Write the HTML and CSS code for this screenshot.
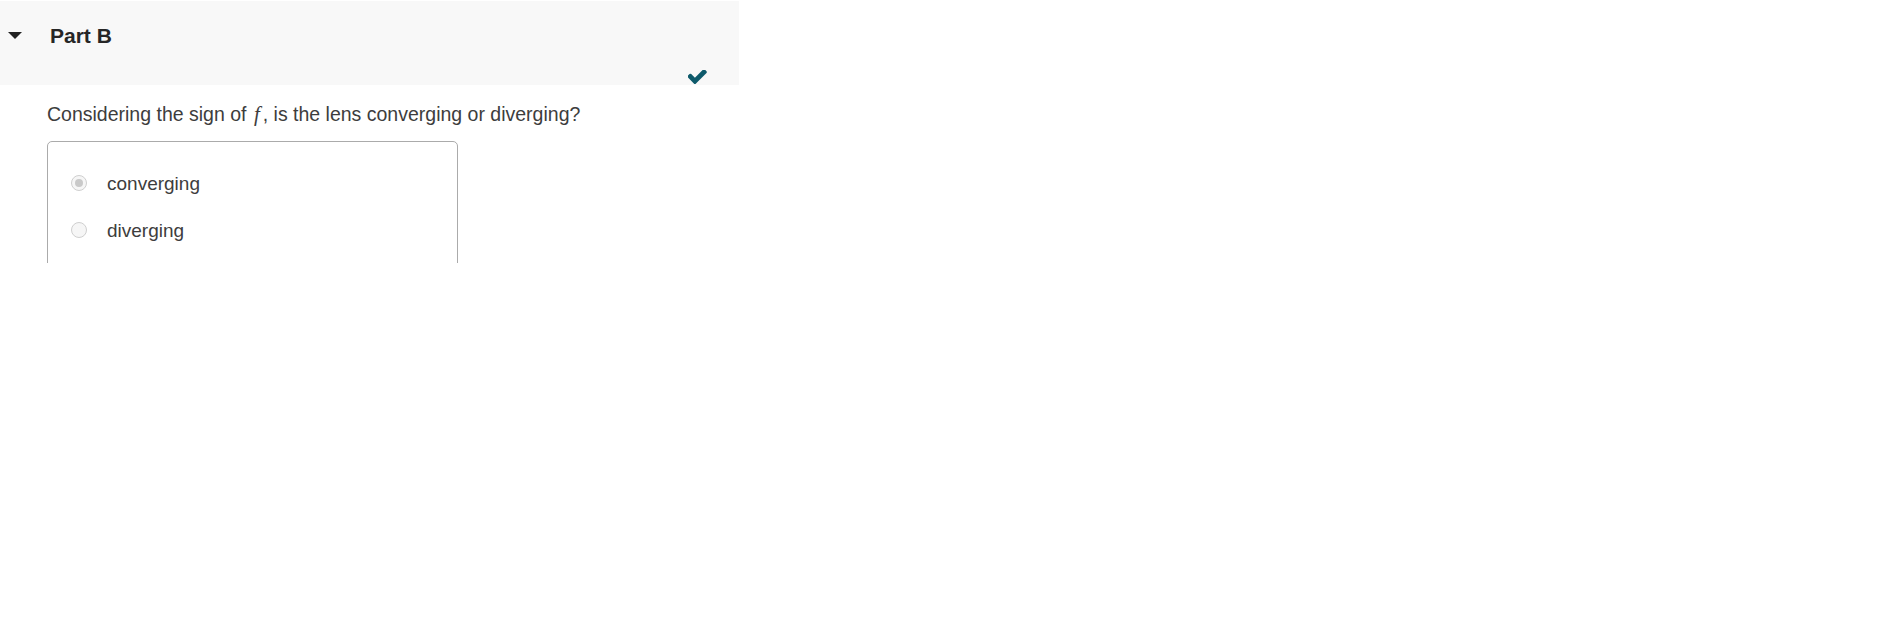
FILE: index.html
```html
<!DOCTYPE html>
<html lang="en">
<head>
<meta charset="utf-8">
<title>Part B</title>
<link rel="stylesheet" href="styles.css">
</head>
<body>
<div class="page">
  <div class="part-header">
    <div class="part-toggle">
      <span class="caret"></span>
      <span class="part-title">Part B</span>
    </div>
    <svg class="status-check" viewBox="173 402 1498 1120" width="19" height="14" aria-hidden="true">
      <path d="M1671 566q0 40-28 68l-724 724-136 136q-28 28-68 28t-68-28l-136-136-362-362q-28-28-28-68t28-68l136-136q28-28 68-28t68 28l294 295 656-657q28-28 68-28t68 28l136 136q28 28 28 68z" fill="#0e5a6b"/>
    </svg>
  </div>
  <div class="part-body">
    <p class="question">Considering the sign of <span class="math-var">f</span>, is the lens converging or diverging?</p>
    <div class="choices">
      <label class="choice">
        <span class="radio radio-checked"></span>
        <span class="choice-text">converging</span>
      </label>
      <label class="choice">
        <span class="radio"></span>
        <span class="choice-text">diverging</span>
      </label>
    </div>
  </div>
</div>
</body>
</html>
```
FILE: styles.css
```css
html, body {
  margin: 0;
  padding: 0;
  background: #ffffff;
}

body {
  font-family: "Liberation Sans", Arial, sans-serif;
  color: #333333;
}

.page {
  height: 263px;
  overflow: hidden;
}

.part-header {
  margin-top: 1px;
  width: 739px;
  height: 84px;
  background: #f8f8f8;
  display: flex;
  align-items: flex-start;
}

.part-toggle {
  display: flex;
  align-items: center;
  margin-top: 23px;
  height: 24px;
}

.caret {
  width: 0;
  height: 0;
  margin-left: 8px;
  margin-right: 28px;
  margin-bottom: 2px;
  border-left: 7px solid transparent;
  border-right: 7px solid transparent;
  border-top: 7px solid #222222;
}

.part-title {
  font-size: 21px;
  font-weight: bold;
  line-height: 24px;
  color: #262626;
}

.status-check {
  display: block;
  margin-left: auto;
  margin-right: 32px;
  margin-bottom: 1px;
  align-self: flex-end;
}

.part-body {
  padding-left: 47px;
}

.question {
  margin: 17px 0 0 0;
  font-size: 19.5px;
  line-height: 24px;
  color: #3d3d3d;
}

.math-var {
  font-family: "Liberation Serif", "Times New Roman", serif;
  font-style: italic;
  font-size: 21px;
  margin: 0 3px 0 2px;
}

.choices {
  margin-top: 15px;
  box-sizing: border-box;
  width: 411px;
  height: 170px;
  border: 1px solid #ababab;
  border-radius: 5px;
  padding: 30px 0 0 23px;
  display: flex;
  flex-direction: column;
  gap: 23px;
}

.choice {
  display: flex;
  align-items: center;
  height: 24px;
  font-size: 19px;
  line-height: 24px;
  color: #3d3d3d;
}

.radio {
  box-sizing: border-box;
  width: 16px;
  height: 16px;
  border: 1px solid #cfcfcf;
  border-radius: 50%;
  background: #f6f6f6;
  margin-right: 20px;
  margin-bottom: 2px;
  display: flex;
  align-items: center;
  justify-content: center;
}

.radio-checked::after {
  content: "";
  width: 8px;
  height: 8px;
  border-radius: 50%;
  background: #c9c9c9;
}
```
